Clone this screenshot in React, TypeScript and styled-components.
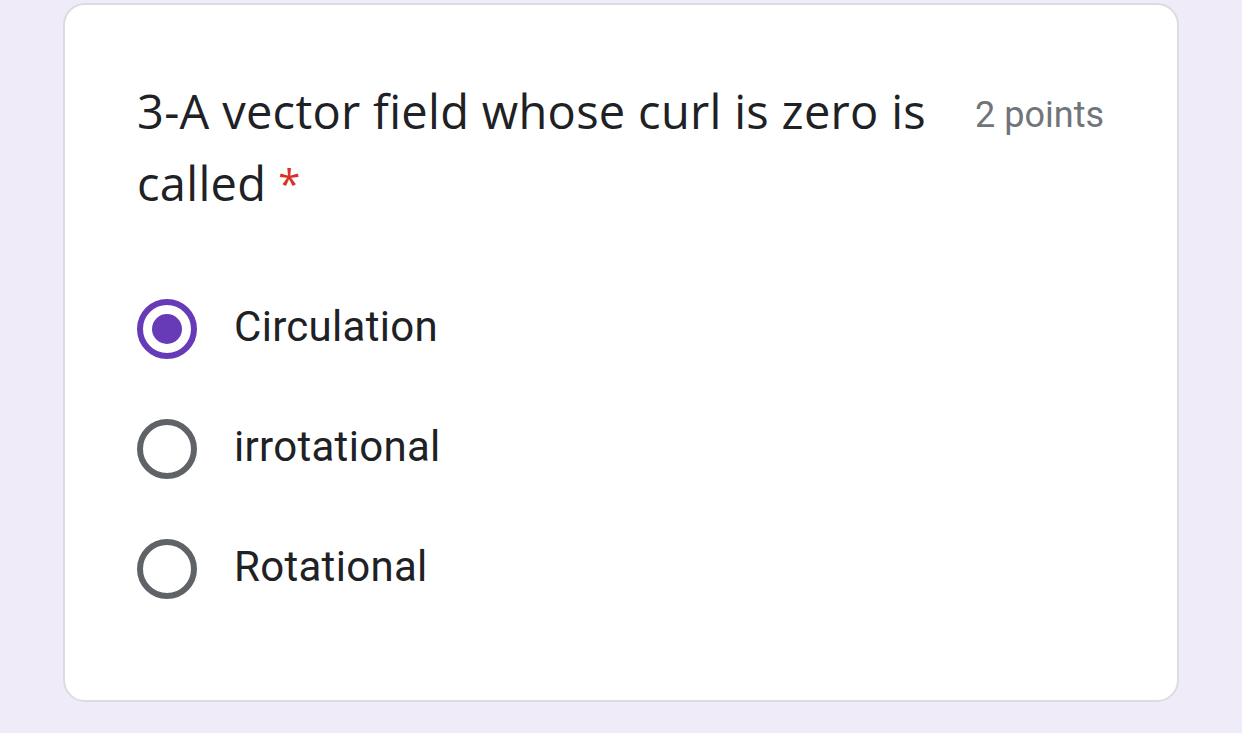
import React from "react";
import styled, { createGlobalStyle } from "styled-components";

const Global = createGlobalStyle`
  html, body { margin: 0; padding: 0; background: #f0ebf8; }
  body { font-family: Roboto, "Liberation Sans", sans-serif; }
`;

const Page = styled.div`
  width: 1242px;
  height: 733px;
  box-sizing: border-box;
  padding: 3px 63px 0;
  background: #f0ebf8;
  overflow: hidden;
`;

const Card = styled.div`
  box-sizing: border-box;
  width: 1116px;
  height: 699px;
  background: #fff;
  border: 2px solid #dadce0;
  border-radius: 22px;
  padding: 70px 73px 72px 72px;
  display: flex;
  flex-direction: column;
`;

const Header = styled.div`
  display: flex;
  align-items: flex-start;
  justify-content: space-between;
  gap: 30px;
`;

const Title = styled.div`
  font-family: "Open Sans", Roboto, sans-serif;
  font-size: 47px;
  letter-spacing: 0.3px;
  line-height: 72px;
  color: #202124;
  width: 810px;
`;

const Asterisk = styled.span`
  color: #d93025;
  font-size: 40px;
  line-height: 0;
  margin-left: 12px;
  vertical-align: 2px;
`;

const Points = styled.div`
  font-family: Roboto, sans-serif;
  font-size: 36px;
  line-height: 72px;
  color: #70757a;
  white-space: nowrap;
  padding-top: 4px;
`;

const Options = styled.div`
  margin-top: 50px;
  display: flex;
  flex-direction: column;
`;

const Option = styled.label`
  height: 120px;
  display: flex;
  align-items: center;
  gap: 37px;
  font-family: Roboto, sans-serif;
  font-size: 42px;
  letter-spacing: 0.3px;
  color: #202124;
`;

const OptionText = styled.span`
  padding-bottom: 5px;
`;

const Radio = styled.span<{ $checked?: boolean }>`
  box-sizing: border-box;
  width: 60px;
  height: 60px;
  border-radius: 50%;
  border: 6px solid ${(p) => (p.$checked ? "#673ab7" : "#5f6368")};
  display: flex;
  align-items: center;
  justify-content: center;
  flex-shrink: 0;
`;

const Dot = styled.span`
  width: 30px;
  height: 30px;
  border-radius: 50%;
  background: #673ab7;
`;

const options = [
  { label: "Circulation", checked: true },
  { label: "irrotational", checked: false },
  { label: "Rotational", checked: false },
];

export default function App() {
  return (
    <>
      <Global />
      <Page>
        <Card>
          <Header>
            <Title>
              3-A vector field whose curl is zero is called
              <Asterisk>*</Asterisk>
            </Title>
            <Points>2 points</Points>
          </Header>
          <Options>
            {options.map((o) => (
              <Option key={o.label}>
                <Radio $checked={o.checked}>{o.checked && <Dot />}</Radio>
                <OptionText>{o.label}</OptionText>
              </Option>
            ))}
          </Options>
        </Card>
      </Page>
    </>
  );
}
